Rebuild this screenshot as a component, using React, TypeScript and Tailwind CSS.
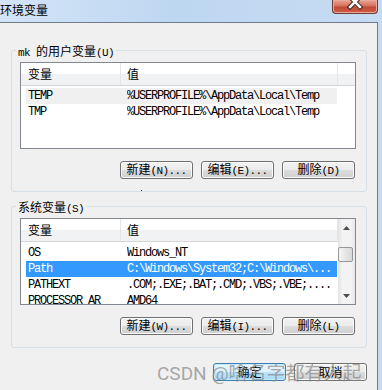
import React from 'react'

const cjk = "font-['Noto_Sans_CJK_SC',sans-serif] text-[12px]"
const mono = "font-['Liberation_Mono','Noto_Sans_CJK_SC',monospace] text-[11px] tracking-[-0.6px]"
const rowFont = "font-['Liberation_Mono',monospace] text-[12px] tracking-[-1.2px]"

type Row = { name: string; value: string; sel?: 'gray' | 'blue' }

const userVars: Row[] = [
  { name: 'TEMP', value: '%USERPROFILE%\\AppData\\Local\\Temp', sel: 'gray' },
  { name: 'TMP', value: '%USERPROFILE%\\AppData\\Local\\Temp' },
]

const sysVars: Row[] = [
  { name: 'OS', value: 'Windows_NT' },
  { name: 'Path', value: 'C:\\Windows\\System32;C:\\Windows\\...', sel: 'blue' },
  { name: 'PATHEXT', value: '.COM;.EXE;.BAT;.CMD;.VBS;.VBE;....' },
  { name: 'PROCESSOR_AR', value: 'AMD64' },
]

const Label = ({ pre, zh, en }: { pre?: string; zh: string; en?: string }) => (
  <span className="inline-flex items-baseline whitespace-pre text-black">
    {pre && <span className={mono}>{pre}</span>}
    <span className={cjk}>{zh}</span>
    {en && <span className={mono}>{en}</span>}
  </span>
)

const Button = ({ zh, en, primary }: { zh: string; en?: string; primary?: boolean }) => (
  <button
    className={
      primary
        ? 'flex h-[18px] w-[73px] items-center justify-center rounded-[3px] border border-[#3c7fb1] bg-[linear-gradient(#eaf6fd,#d9f0fc_50%,#bee6fd_50%,#a7d9f5)] shadow-[inset_0_0_0_1px_#c8ecfd]'
        : 'flex h-[18px] w-[73px] items-center justify-center rounded-[3px] border border-[#707070] bg-[linear-gradient(#f2f2f2,#ebebeb_50%,#dddddd_50%,#cfcfcf)] shadow-[inset_0_0_0_1px_#fcfcfc]'
    }
  >
    <Label zh={zh} en={en} />
  </button>
)

const Arrow = ({ down }: { down?: boolean }) => (
  <svg width="7" height="4" viewBox="0 0 7 4">
    <polygon points={down ? '0,0 7,0 3.5,4' : '0,4 7,4 3.5,0'} fill="#4d4d4d" />
  </svg>
)

const Scrollbar = () => (
  <div className="flex w-[17px] shrink-0 flex-col bg-[linear-gradient(90deg,#e2e2e2,#f3f3f3_25%,#f3f3f3_75%,#e9e9e9)]">
    <div className="flex h-[17px] items-center justify-center">
      <Arrow />
    </div>
    <div className="mt-[11px] h-[15px] w-[15px] rounded-[2px] border border-[#979797] bg-[linear-gradient(90deg,#f5f5f5,#e6e6e6_50%,#d9d9d9)]" />
    <div className="flex-1" />
    <div className="flex h-[17px] items-center justify-center">
      <Arrow down />
    </div>
  </div>
)

const VarList = ({ rows, scroll }: { rows: Row[]; scroll?: boolean }) => (
  <div className="flex h-[87px] w-[336px] overflow-hidden border border-[#828790] bg-white">
    <div className="flex min-w-0 flex-1 flex-col">
      <div className={`flex h-[23px] shrink-0 border-b border-[#d5d5d5] bg-[linear-gradient(#ffffff_50%,#f1f2f4_50%)] leading-[22px] text-black ${cjk}`}>
        <div className="w-[100px] shrink-0 border-r border-[#e3e5e7] pl-[7px]">变量</div>
        <div className="w-[217px] shrink-0 border-r border-[#e3e5e7] pl-[6px]">值</div>
        <div className="flex-1" />
      </div>
      <div className={scroll ? 'pt-[3px]' : 'pt-[2px]'}>
        {rows.map((r) => (
          <div
            key={r.name}
            className={`ml-[5px] flex h-[16px] w-[311px] items-center whitespace-pre leading-[16px] ${rowFont} ${
              r.sel === 'blue' ? 'bg-[#3399ff] text-white' : r.sel === 'gray' ? 'bg-[#f0f0f0] text-black' : 'text-black'
            }`}
          >
            <div className="w-[101px] shrink-0 overflow-hidden pl-[2px]">{r.name}</div>
            <div className="min-w-0 flex-1 overflow-hidden">{r.value}</div>
          </div>
        ))}
      </div>
    </div>
    {scroll && <Scrollbar />}
  </div>
)

const Group = ({ pre, zh, en, rows, keys, scroll, className }: {
  pre?: string
  zh: string
  en: string
  rows: Row[]
  keys: string[]
  scroll?: boolean
  className: string
}) => (
  <fieldset className={`w-[356px] rounded-[3px] border border-[#d5dfe5] px-[8px] pt-[5px] pb-[12px] ${className}`}>
    <legend className="-ml-[4px] h-[14px] px-[2px] leading-[14px]">
      <Label pre={pre} zh={zh} en={en} />
    </legend>
    <VarList rows={rows} scroll={scroll} />
    <div className="mt-[12px] mr-[3px] flex justify-end gap-[8px]">
      <Button zh="新建" en={`(${keys[0]})...`} />
      <Button zh="编辑" en={`(${keys[1]})...`} />
      <Button zh="删除" en={`(${keys[2]})`} />
    </div>
  </fieldset>
)

export default function App() {
  return (
    <div className="relative flex h-[390px] w-[382px] flex-col overflow-hidden bg-[linear-gradient(90deg,#d3e4f7,#bed7f1_45%,#c6dbf2)]">
      {/* title bar */}
      <div className="flex h-[22px] shrink-0">
        <div className={`pt-[1px] leading-[17px] text-black ${cjk}`}>环境变量</div>
        <div className="flex-1" />
        <div className="relative mr-[4px] h-[14px] w-[46px] overflow-hidden rounded-b-[4px] border border-t-0 border-[#6d3a34] bg-[linear-gradient(#e9a797,#d5705c_45%,#c24a36_55%,#cf5d46)] shadow-[inset_0_0_0_1px_#eba99a]">
          <svg className="absolute left-1/2 -top-[6px] -translate-x-1/2" width="16" height="16" viewBox="0 0 16 16">
            <path d="M3 3 L13 13 M13 3 L3 13" stroke="#3b2220" strokeWidth="4.5" strokeLinecap="square" />
            <path d="M3 3 L13 13 M13 3 L3 13" stroke="#ffffff" strokeWidth="2.5" strokeLinecap="square" />
          </svg>
        </div>
      </div>

      {/* dialog body */}
      <div className="flex flex-1">
        <div className="relative flex w-[378px] flex-col border-t border-r border-[#6e7d8c] bg-[#f0f0f0] pl-[11px]">
          <Group className="mt-[20px]" pre="mk " zh="的用户变量" en="(U)" rows={userVars} keys={['N', 'E', 'D']} />
          <Group className="mt-[7px]" zh="系统变量" en="(S)" rows={sysVars} keys={['W', 'I', 'L']} scroll />
          <div className="mt-[15px] flex w-[356px] justify-end gap-[8px]">
            <Button zh="确定" primary />
            <Button zh="取消" />
          </div>
          <div className="absolute left-[141px] top-[167px] h-[1px] w-[1px] bg-[#1f1fff]" />
        </div>
      </div>

      {/* watermark */}
      <div className="pointer-events-none absolute left-[157px] top-[358px] flex items-baseline whitespace-pre text-[#858585]/70">
        <span className="font-['Roboto',sans-serif] text-[19px]">CSDN @</span>
        <span className="font-['Noto_Sans_CJK_SC',sans-serif] text-[19px]">啥名字都有人起</span>
      </div>
    </div>
  )
}
